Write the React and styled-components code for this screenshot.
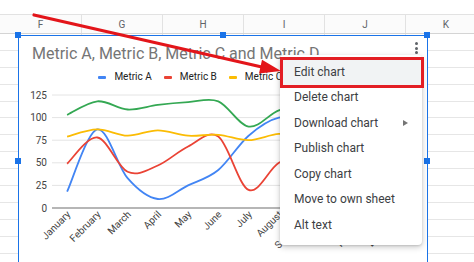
import React from 'react';
import styled, { createGlobalStyle } from 'styled-components';

const GlobalStyle = createGlobalStyle`
  html, body { margin: 0; padding: 0; background: #fff; }
  body { font-family: Roboto, "Liberation Sans", Arial, sans-serif; }
`;

const COLUMNS = ['F', 'G', 'H', 'I', 'J', 'K'];
const ROWS = 14;
const MONTHS = ['January', 'February', 'March', 'April', 'May', 'June', 'July', 'August', 'September', 'October', 'November', 'December'];

const SERIES = [
  { name: 'Metric A', color: '#4285f4', data: [18, 87, 33, 10, 25, 42, 80, 100, 95, 80, 60, 70] },
  { name: 'Metric B', color: '#ea4335', data: [49, 78, 40, 47, 68, 79, 20, 50, 60, 50, 55, 45] },
  { name: 'Metric C', color: '#fbbc04', data: [79, 87, 80, 86, 80, 81, 75, 82, 80, 85, 78, 80] },
  { name: 'Metric D', color: '#34a853', data: [103, 118, 109, 114, 117, 118, 90, 108, 115, 112, 118, 110] },
];

const MENU = ['Edit chart', 'Delete chart', 'Download chart', 'Publish chart', 'Copy chart', 'Move to own sheet', 'Alt text'];

// selection handles of the chart object, in sheet pixels
const HANDLES = [[18, 35], [223, 35], [427, 35], [18, 161], [427, 161]];

// plot coordinates inside the chart svg
const X = (i) => 48.1 + 30.25 * i;
const Y = (v) => 124 - 0.904 * v;

function smoothPath(pts) {
  let d = `M${pts[0][0]},${pts[0][1]}`;
  for (let i = 0; i < pts.length - 1; i++) {
    const p0 = pts[i - 1] || pts[i];
    const p1 = pts[i];
    const p2 = pts[i + 1];
    const p3 = pts[i + 2] || p2;
    const c1x = p1[0] + (p2[0] - p0[0]) / 6;
    const c1y = p1[1] + (p2[1] - p0[1]) / 6;
    const c2x = p2[0] - (p3[0] - p1[0]) / 6;
    const c2y = p2[1] - (p3[1] - p1[1]) / 6;
    d += ` C${c1x.toFixed(1)},${c1y.toFixed(1)} ${c2x.toFixed(1)},${c2y.toFixed(1)} ${p2[0].toFixed(1)},${p2[1].toFixed(1)}`;
  }
  return d;
}

const Sheet = styled.div`
  position: relative;
  width: 474px;
  height: 262px;
  overflow: hidden;
  background: #fff;
  padding-top: 14px;
  box-sizing: border-box;
`;

const ColumnHeader = styled.div`
  display: grid;
  grid-template-columns: 82px repeat(5, 81px);
  height: 20px;
  border-top: 1px solid #e2e2e2;
  border-bottom: 1px solid #d4d4d4;
  box-sizing: border-box;
  background: #fbfbfb;
`;

const HeadCell = styled.div`
  display: flex;
  align-items: center;
  justify-content: center;
  border-right: 1px solid #e2e2e2;
  font-size: 10px;
  color: #5f6368;
`;

const Grid = styled.div`
  display: grid;
  grid-template-columns: 82px repeat(5, 81px);
  grid-auto-rows: 16.9px;
`;

const Cell = styled.div`
  border-right: 1px solid #e6e6e6;
  border-bottom: 1px solid #e6e6e6;
  box-sizing: border-box;
`;

const Chart = styled.div`
  position: absolute;
  left: 18px;
  top: 35px;
  width: 410px;
  height: 260px;
  border: 1px solid #1a73e8;
  box-sizing: border-box;
  background: #fff;
`;

const Handle = styled.span`
  position: absolute;
  left: ${(p) => p.$x - 3}px;
  top: ${(p) => p.$y - 3}px;
  width: 6px;
  height: 6px;
  background: #1a73e8;
`;

const ChartTitle = styled.div`
  margin: 8px 0 0 13px;
  font-size: 16px;
  line-height: 20px;
  color: #757575;
  white-space: nowrap;
`;

const MoreButton = styled.div`
  position: absolute;
  top: 6px;
  right: 9px;
  display: flex;
  flex-direction: column;
  gap: 1.5px;
  span {
    width: 3px;
    height: 3px;
    border-radius: 50%;
    background: #5f6368;
  }
`;

const Legend = styled.div`
  display: flex;
  justify-content: center;
  gap: 12px;
  margin-top: 7px;
  height: 12px;
`;

const LegendItem = styled.div`
  display: flex;
  align-items: center;
  gap: 8px;
  font-size: 10px;
  line-height: 12px;
  color: #222;
  white-space: nowrap;
`;

const Swatch = styled.span`
  width: 8px;
  height: 3px;
  border-radius: 1px;
  background: ${(p) => p.$color};
`;

const Plot = styled.svg`
  display: block;
  margin-top: 1px;
  font-family: Roboto, "Liberation Sans", Arial, sans-serif;
  font-size: 10px;
`;

const Menu = styled.div`
  position: absolute;
  left: 280px;
  top: 55px;
  width: 142px;
  padding: 4px 0 7.5px;
  background: #fff;
  border-radius: 4px;
  box-shadow: 0 2px 6px rgba(0, 0, 0, 0.22), 0 1px 2px rgba(0, 0, 0, 0.12);
  box-sizing: border-box;
`;

const MenuItem = styled.div`
  height: 25.5px;
  display: flex;
  align-items: center;
  justify-content: space-between;
  padding: 0 14px;
  font-size: 12px;
  color: #3c4043;
  white-space: nowrap;
  background: ${(p) => (p.$active ? '#f1f3f4' : 'transparent')};
`;

const SubArrow = styled.span`
  width: 0;
  height: 0;
  border-left: 5px solid #757575;
  border-top: 3.5px solid transparent;
  border-bottom: 3.5px solid transparent;
`;

const Highlight = styled.div`
  position: absolute;
  left: 0;
  top: 2px;
  width: 144px;
  height: 31px;
  border: 3px solid #e31e24;
  box-sizing: border-box;
`;

const Annotation = styled.svg`
  position: absolute;
  left: 0;
  top: 0;
  pointer-events: none;
`;

function ChartPlot() {
  const grid = [25, 50, 75, 100, 125];
  return (
    <Plot width="408" height="175">
      {grid.map((v) => (
        <line key={v} x1="33" x2="396" y1={Y(v)} y2={Y(v)} stroke="#e4e4e4" strokeWidth="1" />
      ))}
      <line x1="33" x2="396" y1={Y(0)} y2={Y(0)} stroke="#9e9e9e" strokeWidth="1.6" />
      {[0, ...grid].map((v) => (
        <text key={v} x="28" y={Y(v)} dy="0.35em" textAnchor="end" fill="#444">{v}</text>
      ))}
      {SERIES.map((s) => (
        <path
          key={s.name}
          d={smoothPath(s.data.map((v, i) => [X(i), Y(v)]))}
          fill="none"
          stroke={s.color}
          strokeWidth="1.8"
        />
      ))}
      {MONTHS.map((m, i) => (
        <text
          key={m}
          x={X(i) + 4}
          y={131}
          textAnchor="end"
          fill="#444"
          transform={`rotate(-45 ${X(i) + 4} 131)`}
        >
          {m}
        </text>
      ))}
    </Plot>
  );
}

export default function App() {
  return (
    <>
      <GlobalStyle />
      <Sheet>
        <ColumnHeader>
          {COLUMNS.map((c) => (
            <HeadCell key={c}>{c}</HeadCell>
          ))}
        </ColumnHeader>
        <Grid>
          {Array.from({ length: ROWS * COLUMNS.length }, (_, i) => (
            <Cell key={i} />
          ))}
        </Grid>

        <Chart>
          <ChartTitle>Metric A, Metric B, Metric C and Metric D</ChartTitle>
          <MoreButton>
            <span />
            <span />
            <span />
          </MoreButton>
          <Legend>
            {SERIES.map((s) => (
              <LegendItem key={s.name}>
                <Swatch $color={s.color} />
                {s.name}
              </LegendItem>
            ))}
          </Legend>
          <ChartPlot />
        </Chart>
        {HANDLES.map(([x, y]) => (
          <Handle key={`${x}-${y}`} $x={x} $y={y} />
        ))}

        <Menu>
          {MENU.map((item, i) => (
            <MenuItem key={item} $active={i === 0}>
              {item}
              {item === 'Download chart' && <SubArrow />}
            </MenuItem>
          ))}
          <Highlight />
        </Menu>

        <Annotation width="474" height="262">
          <line x1="34" y1="15" x2="264" y2="67.5" stroke="#e3151a" strokeWidth="3.2" strokeLinecap="round" />
          <polygon points="281,71 262,59.8 259,73.4" fill="#e3151a" />
        </Annotation>
      </Sheet>
    </>
  );
}
